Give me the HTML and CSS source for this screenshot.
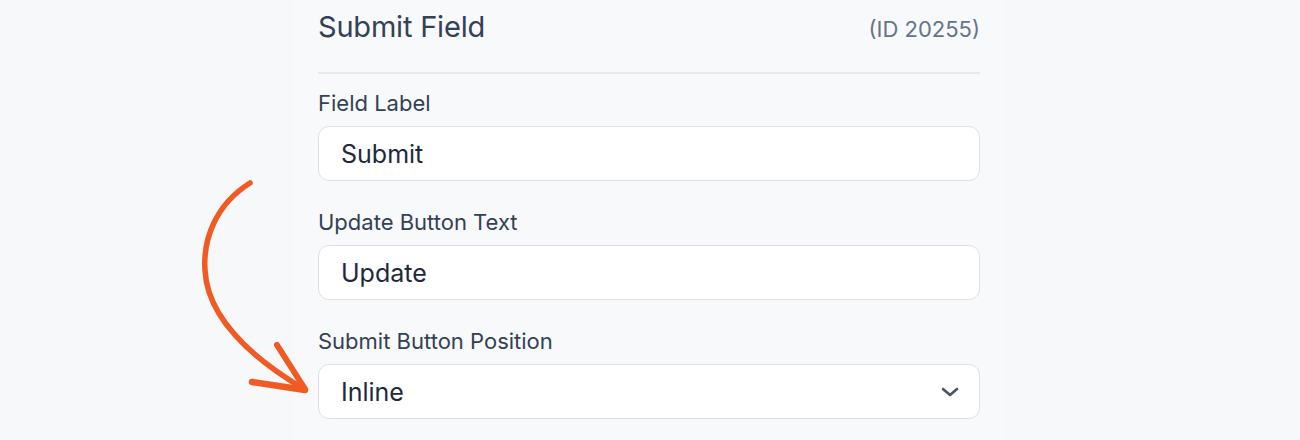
FILE: index.html
```html
<!DOCTYPE html>
<html lang="en">
<head>
<meta charset="utf-8">
<title>Submit Field</title>
<link rel="stylesheet" href="styles.css">
</head>
<body>
<div class="page">
  <section class="panel">
    <header class="panel-head">
      <h1 class="title">Submit Field</h1>
      <span class="field-id">(ID 20255)</span>
    </header>
    <div class="field">
      <label class="label">Field Label</label>
      <div class="input">Submit</div>
    </div>
    <div class="field">
      <label class="label">Update Button Text</label>
      <div class="input">Update</div>
    </div>
    <div class="field">
      <label class="label">Submit Button Position</label>
      <div class="input select">
        <span>Inline</span>
        <svg class="chevron" width="18" height="10" viewBox="0 0 18 10" aria-hidden="true">
          <path d="M2 2 L9 8 L16 2" fill="none" stroke="#4b5563" stroke-width="2.6" stroke-linecap="round" stroke-linejoin="round"/>
        </svg>
      </div>
    </div>
  </section>
  <svg class="arrow" width="1300" height="440" viewBox="0 0 1300 440" aria-hidden="true">
    <g fill="none" stroke="#f15a22" stroke-linecap="round" stroke-linejoin="round">
      <path d="M250 183 C215 205 203 240 205 270 C207 312 242 352 304 389" stroke-width="5.5"/>
      <path d="M277 345 L305 389" stroke-width="6"/>
      <path d="M252 382 L305 390" stroke-width="6.5"/>
    </g>
  </svg>
</div>
</body>
</html>
```

FILE: styles.css
```css
* { box-sizing: border-box; }
html, body { margin: 0; padding: 0; }
body {
  background: #f7f8fa;
  font-family: Inter, "Noto Sans", sans-serif;
  color: #334155;
}
.page {
  position: relative;
  width: 1300px;
  height: 440px;
  overflow: hidden;
  display: flex;
}
.panel {
  margin-left: 293px;
  width: 711px;
  height: 440px;
  background: #f8f9fb;
  padding: 0 24px 0 25px;
}
.panel-head {
  display: flex;
  justify-content: space-between;
  align-items: baseline;
  height: 74px;
  padding-top: 9px;
  border-bottom: 2px solid #e6e8ec;
}
.title {
  margin: 0;
  font-size: 29px;
  line-height: 36px;
  font-weight: 400;
  color: #334155;
  letter-spacing: -0.2px;
}
.field-id {
  font-size: 22px;
  line-height: 36px;
  color: #64748b;
}
.field {
  display: flex;
  flex-direction: column;
}
.label {
  display: block;
  font-size: 22px;
  line-height: 28px;
  color: #334155;
  margin: 15px 0 9px;
}
.field + .field .label { margin-top: 27px; }
.input {
  height: 55px;
  background: #ffffff;
  border: 1px solid #dde1e7;
  border-radius: 11px;
  padding: 0 22px;
  display: flex;
  align-items: center;
  font-size: 25px;
  color: #1e293b;
}
.select { justify-content: space-between; padding-right: 20px; }
.chevron { display: block; }
.arrow {
  position: absolute;
  left: 0;
  top: 0;
  pointer-events: none;
}
```
